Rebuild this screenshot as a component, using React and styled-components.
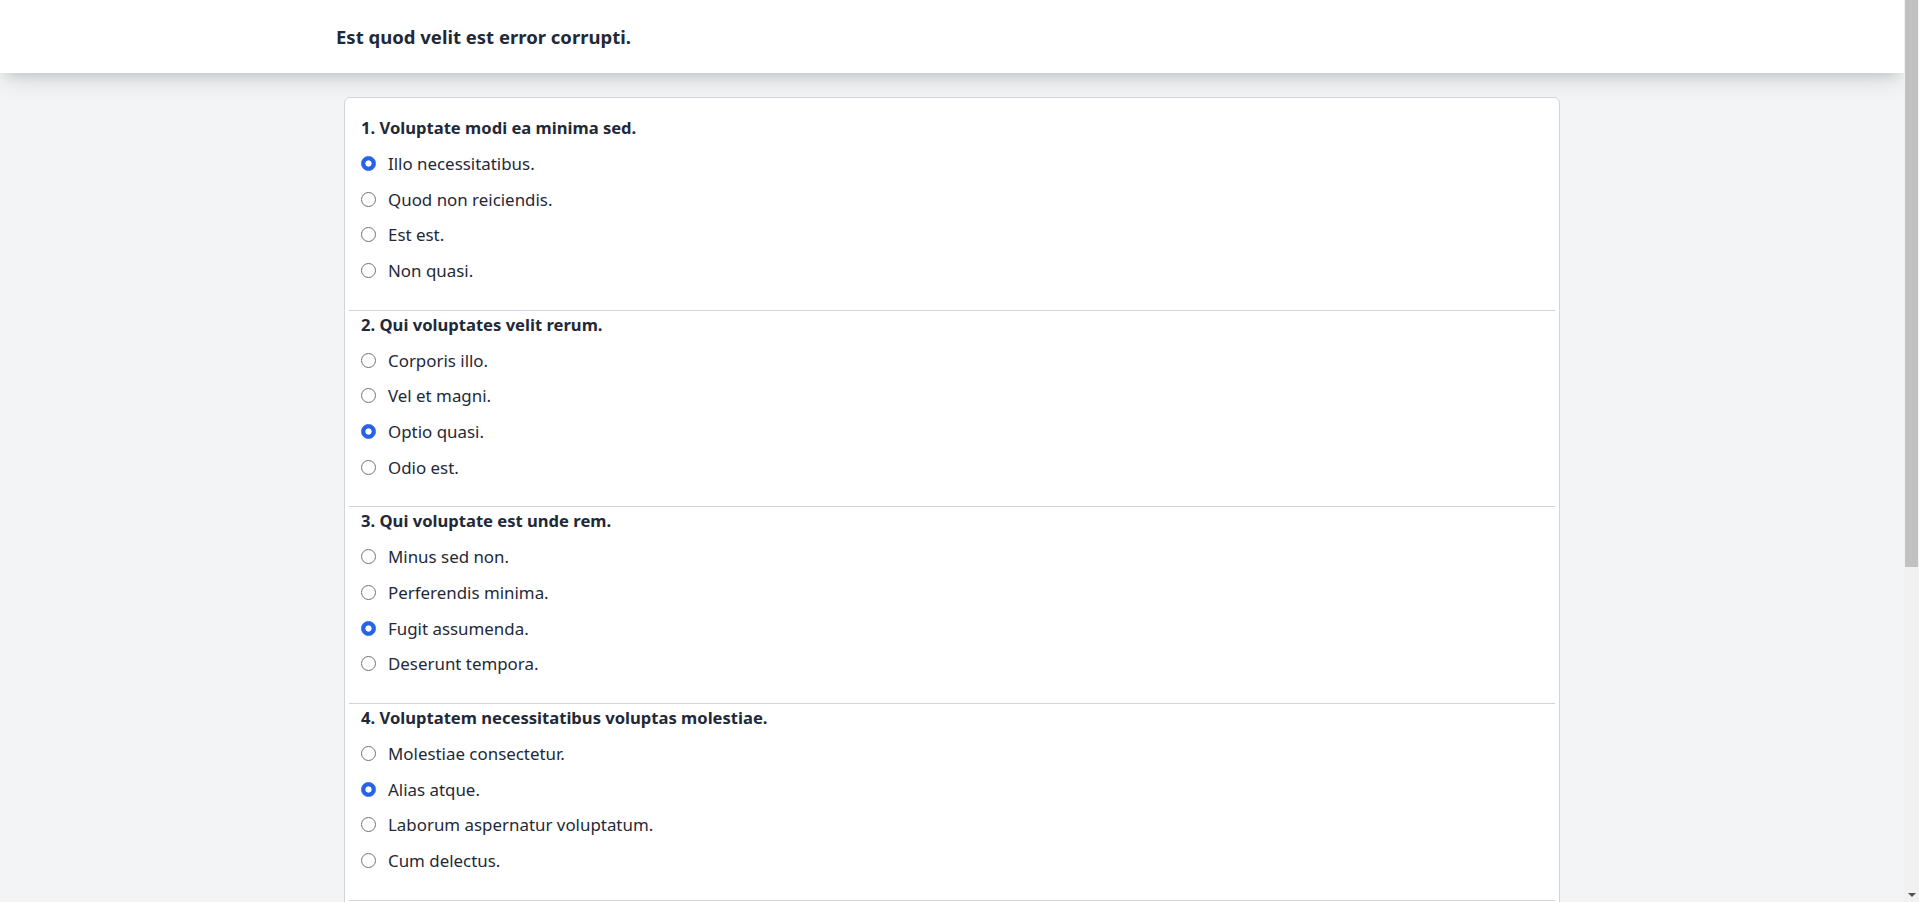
import React, { useLayoutEffect, useRef, useState } from 'react';
import styled, { createGlobalStyle } from 'styled-components';

const GlobalStyle = createGlobalStyle`
  *, *::before, *::after { box-sizing: border-box; }
  html, body { margin: 0; padding: 0; height: 100%; overflow: hidden; }
  body {
    background: #f3f4f6;
    font-family: "Noto Sans", "Liberation Sans", sans-serif;
    color: #1f2937;
  }
  #root { height: 100%; }
`;

const Shell = styled.div`
  display: flex;
  height: 100vh;
`;

const Viewport = styled.div`
  flex: 1;
  min-width: 0;
  overflow-y: auto;
  scrollbar-width: none;
  &::-webkit-scrollbar { display: none; }
`;

const Rail = styled.div`
  flex: none;
  width: 15px;
  height: 100%;
  padding: 0 1px;
  background: #f1f1f1;
  display: flex;
  flex-direction: column;
  align-items: stretch;
`;

const Thumb = styled.div`
  flex: none;
  background: #c1c1c1;
`;

const RailArrow = styled.div`
  margin-top: auto;
  margin-bottom: 5px;
  align-self: center;
  width: 0;
  height: 0;
  border-left: 4px solid transparent;
  border-right: 4px solid transparent;
  border-top: 4px solid #505050;
`;

const Header = styled.header`
  position: relative;
  z-index: 1;
  height: 73px;
  background: #ffffff;
  box-shadow: 0 10px 25px -5px rgba(0, 0, 0, 0.15), 0 8px 10px -6px rgba(0, 0, 0, 0.1);
`;

const HeaderInner = styled.div`
  max-width: 1280px;
  height: 100%;
  margin: 0 auto;
  padding: 0 24px;
  display: flex;
  align-items: center;
`;

const HeaderTitle = styled.h1`
  margin: 0;
  font-size: 18.5px;
  font-weight: 700;
  color: #1f2937;
`;

const Main = styled.main`
  max-width: 1280px;
  margin: 0 auto;
  padding: 24px 32px 60px;
`;

const Card = styled.form`
  background: #ffffff;
  border: 1px solid #d1d5db;
  border-radius: 6px;
  padding: 16px 4px;
`;

const Question = styled.div`
  padding: 2px 12px 27px;
  border-bottom: 1px solid #d1d5db;
`;

const QuestionTitle = styled.div`
  font-size: 16.6px;
  line-height: 24px;
  font-weight: 700;
  color: #1f2937;
`;

const Option = styled.label`
  display: flex;
  align-items: center;
  gap: 12px;
  height: 24px;
  margin-top: 11.67px;
  font-size: 16.9px;
  color: #1f2937;
  cursor: pointer;
`;

const Radio = styled.input.attrs({ type: 'radio' })`
  appearance: none;
  -webkit-appearance: none;
  margin: 0;
  width: 15px;
  height: 15px;
  flex: none;
  border-radius: 50%;
  border: 1px solid #6b7280;
  background: #ffffff;
  cursor: pointer;
  &:checked {
    border-color: #2563eb;
    background: radial-gradient(circle, #ffffff 0 2.8px, #2563eb 3.4px);
  }
`;

const Footer = styled.div`
  padding: 20px 12px 4px;
  display: flex;
  justify-content: flex-end;
`;

const Submit = styled.button`
  font-family: inherit;
  font-size: 15px;
  font-weight: 600;
  color: #ffffff;
  background: #2563eb;
  border: 0;
  border-radius: 6px;
  padding: 10px 20px;
`;

const questions = [
  { title: 'Voluptate modi ea minima sed.', options: ['Illo necessitatibus.', 'Quod non reiciendis.', 'Est est.', 'Non quasi.'], answer: 0 },
  { title: 'Qui voluptates velit rerum.', options: ['Corporis illo.', 'Vel et magni.', 'Optio quasi.', 'Odio est.'], answer: 2 },
  { title: 'Qui voluptate est unde rem.', options: ['Minus sed non.', 'Perferendis minima.', 'Fugit assumenda.', 'Deserunt tempora.'], answer: 2 },
  { title: 'Voluptatem necessitatibus voluptas molestiae.', options: ['Molestiae consectetur.', 'Alias atque.', 'Laborum aspernatur voluptatum.', 'Cum delectus.'], answer: 1 },
  { title: 'Et quia dolorem omnis.', options: ['Aut sint.', 'Nisi quia voluptas.', 'Ut rerum.', 'Quae ipsa.'], answer: 3 },
  { title: 'Sunt aut et eveniet.', options: ['Sed dolores.', 'Eum ut aut.', 'Id porro.', 'Eos quia.'], answer: 0 },
];

export default function App() {
  const [answers, setAnswers] = useState(questions.map((q) => q.answer));
  const [thumb, setThumb] = useState({ top: 0, height: 567 });
  const viewRef = useRef(null);

  const measure = () => {
    const el = viewRef.current;
    if (!el) return;
    const ch = el.clientHeight;
    const sh = el.scrollHeight;
    const height = Math.round((ch * ch) / sh);
    const top = Math.round((el.scrollTop / sh) * ch);
    setThumb({ top, height });
  };

  useLayoutEffect(() => {
    measure();
    window.addEventListener('resize', measure);
    return () => window.removeEventListener('resize', measure);
  }, []);

  const choose = (qi, oi) =>
    setAnswers((prev) => prev.map((a, i) => (i === qi ? oi : a)));

  return (
    <>
      <GlobalStyle />
      <Shell>
        <Viewport ref={viewRef} onScroll={measure}>
          <Header>
            <HeaderInner>
              <HeaderTitle>Est quod velit est error corrupti.</HeaderTitle>
            </HeaderInner>
          </Header>
          <Main>
            <Card onSubmit={(e) => e.preventDefault()}>
              {questions.map((q, qi) => (
                <Question key={qi}>
                  <QuestionTitle>{qi + 1}. {q.title}</QuestionTitle>
                  {q.options.map((opt, oi) => (
                    <Option key={oi}>
                      <Radio
                        name={`q${qi}`}
                        checked={answers[qi] === oi}
                        onChange={() => choose(qi, oi)}
                      />
                      {opt}
                    </Option>
                  ))}
                </Question>
              ))}
              <Footer>
                <Submit type="submit">Submit</Submit>
              </Footer>
            </Card>
          </Main>
        </Viewport>
        <Rail aria-hidden="true">
          <Thumb style={{ marginTop: thumb.top, height: thumb.height }} />
          <RailArrow />
        </Rail>
      </Shell>
    </>
  );
}
